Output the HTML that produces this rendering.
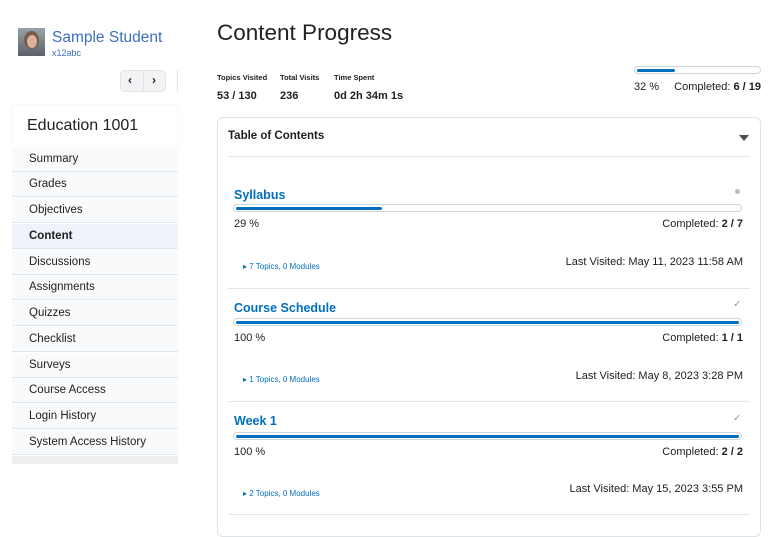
<!DOCTYPE html><html><head><style>
body{margin:0;width:768px;height:520px;overflow:hidden;background:#fff;font-family:"Liberation Sans",sans-serif;color:#202122;position:relative}
.a{position:absolute;white-space:nowrap}
.nav{position:absolute;left:12px;width:166px;height:25px;border-bottom:1px solid #dfe6ef;font-size:11.5px;line-height:25px;padding-left:17px;box-sizing:border-box;background:#f9fafb}
.bar{position:absolute;left:233px;width:509px;height:8px;border:1px solid #cdd5dc;border-radius:5px;box-sizing:border-box;background:#fff}
.bar i{position:absolute;left:2px;top:2px;height:3px;background:#006fbf;border-radius:2px}
.t{font-size:12.5px;font-weight:bold;color:#006fbf}
.s{font-size:11px}
.lk{font-size:8px;color:#006fbf}
</style></head><body>
<div class="a" style="left:18px;top:28px;width:27px;height:28px;background:linear-gradient(#9aa3aa,#5a6168);"></div>
<div class="a" style="left:24px;top:31px;width:15px;height:18px;border-radius:50%;background:#7a5a48"></div>
<div class="a" style="left:27px;top:35px;width:10px;height:13px;border-radius:50%;background:#d9b39c"></div>
<div class="a" style="left:52px;top:29px;font-size:15.5px;color:#3d6fbf">Sample Student</div>
<div class="a" style="left:52px;top:48px;font-size:9px;color:#3d6fbf">x12abc</div>
<div class="a" style="left:120px;top:70px;width:46px;height:22px;border:1px solid #dfe3e8;border-radius:5px;background:#f1f3f5;box-sizing:border-box"></div>
<div class="a" style="left:143px;top:70px;width:1px;height:22px;background:#dfe3e8"></div>
<div class="a" style="left:128px;top:73px;font-size:12px;font-weight:bold">&#8249;</div>
<div class="a" style="left:152px;top:73px;font-size:12px;font-weight:bold">&#8250;</div>
<div class="a" style="left:177px;top:70px;width:1px;height:22px;background:#dfe3e8"></div>
<div class="a" style="left:12px;top:106px;width:166px;height:41px;background:#fff;box-shadow:0 -1px 3px rgba(0,0,0,.05)"></div>
<div class="a" style="left:27px;top:117px;font-size:16px">Education 1001</div>
<div class="nav" style="top:147px">Summary</div>
<div class="nav" style="top:172px">Grades</div>
<div class="nav" style="top:198px">Objectives</div>
<div class="nav" style="top:224px;background:#edf3f9;font-weight:bold">Content</div>
<div class="nav" style="top:250px">Discussions</div>
<div class="nav" style="top:275px">Assignments</div>
<div class="nav" style="top:301px">Quizzes</div>
<div class="nav" style="top:327px">Checklist</div>
<div class="nav" style="top:353px">Surveys</div>
<div class="nav" style="top:378px">Course Access</div>
<div class="nav" style="top:404px">Login History</div>
<div class="nav" style="top:430px">System Access History</div>
<div class="a" style="left:12px;top:456px;width:166px;height:8px;background:#eceef0"></div>

<div class="a" style="left:217px;top:20px;font-size:22.5px;color:#202122">Content Progress</div>
<div class="a" style="left:217px;top:73px;font-size:7.5px;font-weight:bold">Topics Visited</div>
<div class="a" style="left:280px;top:73px;font-size:7.5px;font-weight:bold">Total Visits</div>
<div class="a" style="left:334px;top:73px;font-size:7.5px;font-weight:bold">Time Spent</div>
<div class="a" style="left:217px;top:90px;font-size:11px;font-weight:bold">53 / 130</div>
<div class="a" style="left:280px;top:90px;font-size:11px;font-weight:bold">236</div>
<div class="a" style="left:334px;top:90px;font-size:11px;font-weight:bold">0d 2h 34m 1s</div>
<div class="bar" style="left:634px;top:66px;width:127px"><i style="width:38px"></i></div>
<div class="a" style="left:634px;top:81px;font-size:11px">32 %</div>
<div class="a" style="right:7px;top:81px;font-size:11px">Completed: <b>6 / 19</b></div>

<div class="a" style="left:217px;top:117px;width:544px;height:420px;border:1px solid #dfe3e8;border-radius:6px;box-sizing:border-box"></div>
<div class="a" style="left:228px;top:130px;font-size:11.5px;font-weight:bold">Table of Contents</div>
<div class="a" style="left:739px;top:135px;border-left:5px solid transparent;border-right:5px solid transparent;border-top:6px solid #494c4e"></div>
<div class="a" style="left:228px;top:156px;width:522px;height:1px;background:#e3e6e9"></div>

<div class="a t" style="left:234px;top:188px">Syllabus</div>
<div class="a" style="left:735px;top:189px;width:5px;height:5px;border-radius:50%;background:#bbb"></div>
<div class="bar" style="top:204px"><i style="width:146px"></i></div>
<div class="a s" style="left:234px;top:218px">29 %</div>
<div class="a s" style="right:25px;top:218px">Completed: <b>2 / 7</b></div>
<div class="a lk" style="left:243px;top:262px">&#9656; 7 Topics, 0 Modules</div>
<div class="a s" style="right:25px;top:256px">Last Visited: May 11, 2023 11:58 AM</div>
<div class="a" style="left:228px;top:288px;width:522px;height:1px;background:#e3e6e9"></div>

<div class="a t" style="left:234px;top:301px">Course Schedule</div>
<div class="a" style="left:733px;top:299px;font-size:10px;color:#999">&#10003;</div>
<div class="bar" style="top:318px"><i style="width:503px"></i></div>
<div class="a s" style="left:234px;top:332px">100 %</div>
<div class="a s" style="right:25px;top:332px">Completed: <b>1 / 1</b></div>
<div class="a lk" style="left:243px;top:375px">&#9656; 1 Topics, 0 Modules</div>
<div class="a s" style="right:25px;top:370px">Last Visited: May 8, 2023 3:28 PM</div>
<div class="a" style="left:228px;top:401px;width:522px;height:1px;background:#e3e6e9"></div>

<div class="a t" style="left:234px;top:414px">Week 1</div>
<div class="a" style="left:733px;top:413px;font-size:10px;color:#999">&#10003;</div>
<div class="bar" style="top:432px"><i style="width:503px"></i></div>
<div class="a s" style="left:234px;top:446px">100 %</div>
<div class="a s" style="right:25px;top:446px">Completed: <b>2 / 2</b></div>
<div class="a lk" style="left:243px;top:489px">&#9656; 2 Topics, 0 Modules</div>
<div class="a s" style="right:25px;top:483px">Last Visited: May 15, 2023 3:55 PM</div>
<div class="a" style="left:228px;top:514px;width:522px;height:1px;background:#e3e6e9"></div>
</body></html>
